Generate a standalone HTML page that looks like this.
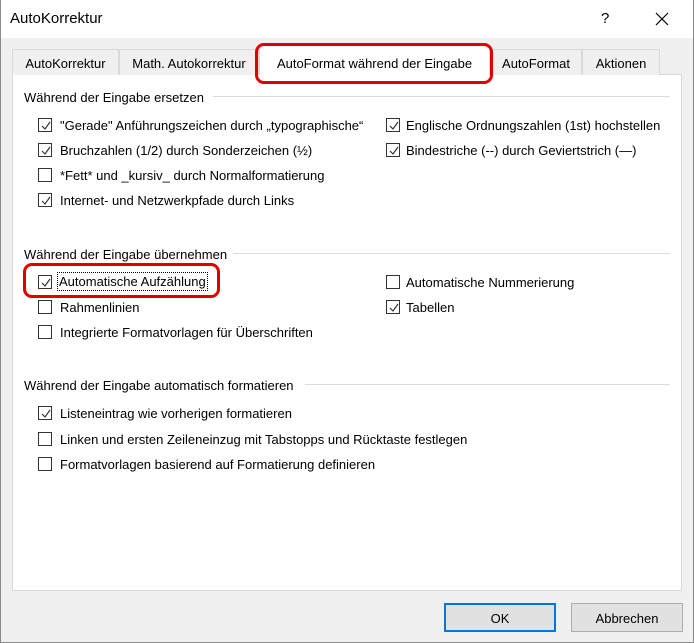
<!DOCTYPE html>
<html><head><meta charset="utf-8"><style>
*{margin:0;padding:0;box-sizing:border-box}
body{width:694px;height:643px;background:#f0f0f0;font-family:"Liberation Sans",sans-serif;font-size:12px;color:#000;position:relative;overflow:hidden}
.win{position:absolute;left:0;top:0;width:694px;height:643px;border:1px solid #8a8a8a;border-top:none}
.title{position:absolute;left:1px;top:0;width:692px;height:38px;background:#fff}
.t{position:absolute;white-space:nowrap}
.tab{position:absolute;top:49px;height:26px;border:1px solid #d9d9d9;border-bottom:none;background:#f0f0f0;text-align:center;line-height:27px;font-size:13px}
.pane{position:absolute;left:12px;top:74px;width:670px;height:517px;background:#fff;border:1px solid #d9d9d9}
.hdr{position:absolute;left:24px;font-size:13px}
.line{position:absolute;height:1px;background:#dcdcdc;right:24px}
.cb{position:absolute;width:14px;height:14px;border:1px solid #333;background:#fff;margin-top:1px}
.cb svg{position:absolute;left:1px;top:1px}
.lb{position:absolute;white-space:nowrap;font-size:13px}
.btn{position:absolute;top:603px;height:29px;background:#e1e1e1;border:1px solid #adadad;text-align:center;line-height:29px;font-size:13px}
.red{position:absolute;border:3px solid #e00000;border-radius:9px}
</style></head><body>
<div class="win"></div>
<div class="title"></div>
<div class="t" style="left:10px;top:10px;font-size:15px">AutoKorrektur</div>
<div class="t" style="left:601px;top:10px;font-size:15px">?</div>
<svg style="position:absolute;left:655px;top:12px" width="14" height="14"><path d="M1 1L13 13M13 1L1 13" stroke="#000" stroke-width="1.2"/></svg>

<div class="pane"></div>
<div class="tab" style="left:12px;width:107px">AutoKorrektur</div>
<div class="tab" style="left:119px;width:140px">Math. Autokorrektur</div>
<div class="tab" style="left:259px;width:231px;top:45px;height:30px;background:#fff;line-height:35px">AutoFormat während der Eingabe</div>
<div class="tab" style="left:490px;width:92px">AutoFormat</div>
<div class="tab" style="left:582px;width:78px">Aktionen</div>
<div class="red" style="left:255px;top:43px;width:238px;height:41px"></div>

<div class="hdr" style="top:90px">Während der Eingabe ersetzen</div>
<div class="line" style="left:213px;top:96px"></div>
<div class="hdr" style="top:247px">Während der Eingabe übernehmen</div>
<div class="line" style="left:233px;top:253px"></div>
<div class="hdr" style="top:378px">Während der Eingabe automatisch formatieren</div>
<div class="line" style="left:305px;top:384px"></div>

<div class="cb" style="left:38px;top:117px"><svg width="12" height="12"><path d="M2 6L5 9L10 2" stroke="#333" fill="none" stroke-width="1.2"/></svg></div>
<div class="lb" style="left:60px;top:118px">"Gerade" Anführungszeichen durch „typographische“</div>
<div class="cb" style="left:38px;top:142px"><svg width="12" height="12"><path d="M2 6L5 9L10 2" stroke="#333" fill="none" stroke-width="1.2"/></svg></div>
<div class="lb" style="left:60px;top:143px">Bruchzahlen (1/2) durch Sonderzeichen (½)</div>
<div class="cb" style="left:38px;top:167px"></div>
<div class="lb" style="left:60px;top:168px">*Fett* und _kursiv_ durch Normalformatierung</div>
<div class="cb" style="left:38px;top:192px"><svg width="12" height="12"><path d="M2 6L5 9L10 2" stroke="#333" fill="none" stroke-width="1.2"/></svg></div>
<div class="lb" style="left:60px;top:193px">Internet- und Netzwerkpfade durch Links</div>
<div class="cb" style="left:386px;top:117px"><svg width="12" height="12"><path d="M2 6L5 9L10 2" stroke="#333" fill="none" stroke-width="1.2"/></svg></div>
<div class="lb" style="left:406px;top:118px">Englische Ordnungszahlen (1st) hochstellen</div>
<div class="cb" style="left:386px;top:142px"><svg width="12" height="12"><path d="M2 6L5 9L10 2" stroke="#333" fill="none" stroke-width="1.2"/></svg></div>
<div class="lb" style="left:406px;top:143px">Bindestriche (--) durch Geviertstrich (—)</div>

<div class="cb" style="left:38px;top:274px"><svg width="12" height="12"><path d="M2 6L5 9L10 2" stroke="#333" fill="none" stroke-width="1.2"/></svg></div>
<div class="lb" style="left:57px;top:272px;border:1px dotted #000;padding:1px 1px">Automatische Aufzählung</div>
<div class="red" style="left:23px;top:263px;width:197px;height:35px"></div>
<div class="cb" style="left:38px;top:299px"></div>
<div class="lb" style="left:60px;top:300px">Rahmenlinien</div>
<div class="cb" style="left:38px;top:324px"></div>
<div class="lb" style="left:60px;top:325px">Integrierte Formatvorlagen für Überschriften</div>
<div class="cb" style="left:386px;top:274px"></div>
<div class="lb" style="left:406px;top:275px">Automatische Nummerierung</div>
<div class="cb" style="left:386px;top:299px"><svg width="12" height="12"><path d="M2 6L5 9L10 2" stroke="#333" fill="none" stroke-width="1.2"/></svg></div>
<div class="lb" style="left:406px;top:300px">Tabellen</div>

<div class="cb" style="left:38px;top:405px"><svg width="12" height="12"><path d="M2 6L5 9L10 2" stroke="#333" fill="none" stroke-width="1.2"/></svg></div>
<div class="lb" style="left:60px;top:406px">Listeneintrag wie vorherigen formatieren</div>
<div class="cb" style="left:38px;top:431px"></div>
<div class="lb" style="left:60px;top:432px">Linken und ersten Zeileneinzug mit Tabstopps und Rücktaste festlegen</div>
<div class="cb" style="left:38px;top:456px"></div>
<div class="lb" style="left:60px;top:457px">Formatvorlagen basierend auf Formatierung definieren</div>

<div class="btn" style="left:444px;width:112px;border:2px solid #0078d7;line-height:27px">OK</div>
<div class="btn" style="left:571px;width:112px">Abbrechen</div>
</body></html>
